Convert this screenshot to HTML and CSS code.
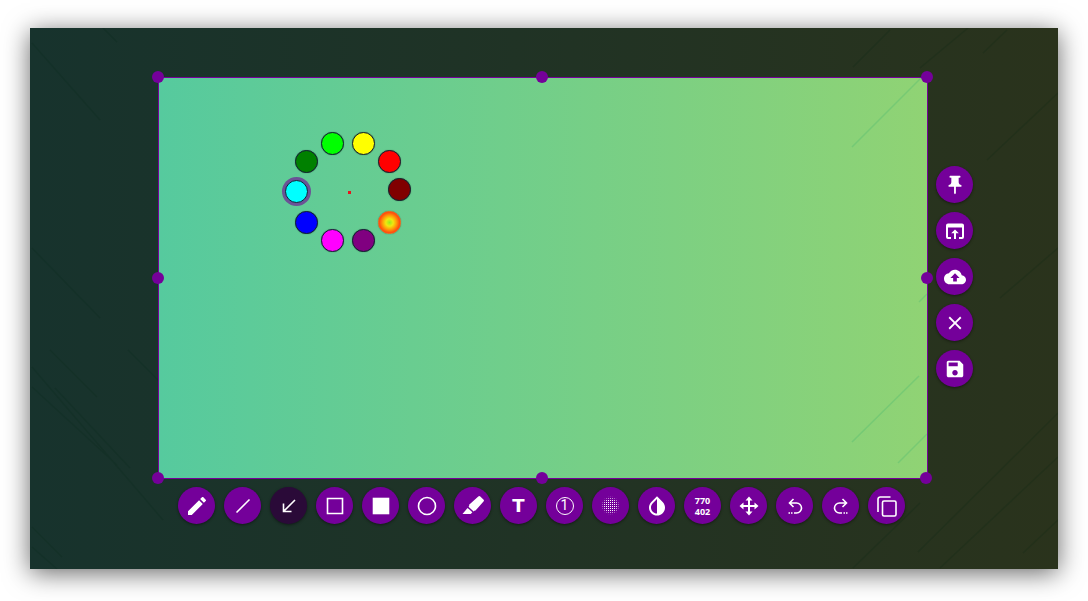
FILE: index.html
```html
<!DOCTYPE html>
<html lang="en">
<head>
<meta charset="utf-8">
<title>Screenshot editor</title>
<link rel="stylesheet" href="styles.css">
</head>
<body>
<main class="screen">
  <svg class="streaks" viewBox="0 0 1028 541" aria-hidden="true">
    <g class="streak-dark">
      <path d="M2 15L70 92M73 0L87 14M2 339L133 492M2 359L87 437M20 322L67 369M98 322L133 357M2 499L32 529M2 519L27 541M2 220L70 290M25 360L100 440"/>
      <path d="M823 39L860 2M890 40L938 0M953 25L977 2M957 132L1028 65M888 524L1028 385M910 540L1028 429M993 525L1028 492M823 540L890 475M970 270L1028 220"/>
    </g>
  </svg>
  <section class="selection">
    <svg class="streaks" viewBox="0 0 768 400" aria-hidden="true">
      <g class="streak-light">
        <path d="M693 69L762 0M693 364L760 298M739 385L768 356M760 224L768 216"/>
      </g>
    </svg>
    <div class="wheel">
      <span class="dot c-green" style="left:161px;top:54px"></span>
      <span class="dot c-yellow" style="left:192px;top:54px"></span>
      <span class="dot c-red" style="left:218px;top:72px"></span>
      <span class="dot c-maroon" style="left:228px;top:100px"></span>
      <span class="dot c-fire" style="left:218px;top:133px"></span>
      <span class="dot c-purple" style="left:192px;top:151px"></span>
      <span class="dot c-magenta" style="left:161px;top:151px"></span>
      <span class="dot c-blue" style="left:135px;top:133px"></span>
      <span class="dot c-cyan" style="left:125px;top:102px"></span>
      <span class="dot c-darkgreen" style="left:135px;top:72px"></span>
      <span class="center"></span>
    </div>
    <i class="handle h-tl"></i><i class="handle h-t"></i><i class="handle h-tr"></i>
    <i class="handle h-l"></i><i class="handle h-r"></i>
    <i class="handle h-bl"></i><i class="handle h-b"></i><i class="handle h-br"></i>
  </section>

  <nav class="bar bar-side">
    <button class="tool"><svg class="ic-22" viewBox="0 0 24 24"><path d="M16 9V4h1c.55 0 1-.45 1-1s-.45-1-1-1H7c-.55 0-1 .45-1 1s.45 1 1 1h1v5c0 1.66-1.34 3-3 3v2h5.97v7l1 1 1-1v-7H19v-2c-1.66 0-3-1.34-3-3z"/></svg></button>
    <button class="tool"><svg viewBox="0 0 24 24"><path d="M5 4.500h14a2 2 0 0 1 2 2V18a2 2 0 0 1-2 2h-3v-2h3V8.500H5V18h3v2H5a2 2 0 0 1-2-2V6.500a2 2 0 0 1 2-2z"/><path d="M12 10.500l-3.800 3.800H11V20h2v-5.700h2.800z"/></svg></button>
    <button class="tool"><svg class="ic-22" viewBox="0 0 24 24"><path d="M19.35 10.04C18.67 6.59 15.64 4 12 4 9.11 4 6.6 5.64 5.35 8.04 2.34 8.36 0 10.91 0 14c0 3.31 2.69 6 6 6h13c2.76 0 5-2.24 5-5 0-2.64-2.05-4.78-4.65-4.96zM14 13v4h-4v-4H7l5-5 5 5h-3z"/></svg></button>
    <button class="tool"><svg class="ic-22" viewBox="0 0 24 24"><path d="M19 6.41L17.59 5 12 10.59 6.41 5 5 6.41 10.59 12 5 17.59 6.41 19 12 13.41 17.59 19 19 17.59 13.41 12z"/></svg></button>
    <button class="tool"><svg class="ic-22" viewBox="0 0 24 24"><path d="M17 3H5c-1.11 0-2 .9-2 2v14c0 1.1.89 2 2 2h14c1.1 0 2-.9 2-2V7l-4-4zm-5 16c-1.66 0-3-1.34-3-3s1.34-3 3-3 3 1.34 3 3-1.34 3-3 3zm3-10H5V5h10v4z"/></svg></button>
  </nav>

  <nav class="bar bar-bottom">
    <button class="tool"><svg viewBox="0 0 24 24"><path d="M3 17.25V21h3.75L17.81 9.94l-3.75-3.75L3 17.25zM20.71 7.04c.39-.39.39-1.02 0-1.41l-2.34-2.34c-.39-.39-1.02-.39-1.41 0l-1.83 1.83 3.75 3.75 1.83-1.83z"/></svg></button>
    <button class="tool"><svg viewBox="0 0 24 24"><path class="ln" d="M5.500 18.500L18.500 5.500"/></svg></button>
    <button class="tool tool-active"><svg viewBox="0 0 24 24"><path class="ln" d="M18 6L6.500 17.500M6.500 9.500V17.500H14.500"/></svg></button>
    <button class="tool"><svg viewBox="0 0 24 24"><path class="ln" d="M4.500 4.500h15v15h-15z"/></svg></button>
    <button class="tool"><svg viewBox="0 0 24 24"><path d="M3.700 3.700h16.600v16.600H3.700z"/></svg></button>
    <button class="tool"><svg viewBox="0 0 24 24"><circle class="ln" cx="12" cy="12" r="8.500"/></svg></button>
    <button class="tool"><svg viewBox="0 0 24 24"><path d="M17.300 2.600a1.400 1.400 0 0 1 2 0l3.100 2.800a1.400 1.400 0 0 1 .1 2L14.500 16.600l-1.200.2-.6.7-5.200-4.700.7-.8-.1-1.300z"/><path d="M6.600 13.900l4.800 4.300-1.700 1.800H1.500z"/></svg></button>
    <button class="tool tool-letter">T</button>
    <button class="tool"><span class="num">1</span></button>
    <button class="tool"><span class="dither"></span></button>
    <button class="tool"><svg viewBox="0 0 24 24"><path d="M17.66 7.930L12 2.270 6.340 7.930c-3.120 3.120-3.120 8.190 0 11.310C7.900 20.800 9.950 21.580 12 21.580c2.050 0 4.100-.78 5.660-2.340 3.120-3.120 3.120-8.190 0-11.310zM12 19.590c-1.600 0-3.110-.62-4.240-1.760C6.620 16.690 6 15.190 6 13.590s.62-3.110 1.760-4.240L12 5.100v14.490z"/></svg></button>
    <button class="tool tool-size"><span>770</span><span>402</span></button>
    <button class="tool"><svg viewBox="0 0 24 24"><path class="ln ln-thick" d="M12 5V19M5 12H19"/><path d="M12 2.500L8.500 6.500h7zM12 21.500l-3.500-4h7zM2.500 12l4-3.500v7zM21.500 12l-4-3.500v7z"/></svg></button>
    <button class="tool"><svg viewBox="0 0 24 24"><path class="ln" d="M10.500 5L6.500 9l4 4M6.500 9H13.500a5 5 0 0 1 0 10H11"/><path d="M8 18.200h1.500v1.500H8zM5.500 18.200H7v1.500H5.500z"/></svg></button>
    <button class="tool"><svg viewBox="0 0 24 24"><path class="ln" d="M13.500 5l4 4-4 4M17.500 9H10.500a5 5 0 0 0 0 10H13"/><path d="M14.500 18.200H16v1.500h-1.500zM17 18.200h1.500v1.500H17z"/></svg></button>
    <button class="tool"><svg viewBox="0 0 24 24"><path class="ln" d="M15.500 3H5.200A2.200 2.200 0 0 0 3 5.200V18"/><rect class="ln" x="7.500" y="7" width="13.500" height="15" rx="1.500"/></svg></button>
  </nav>
</main>
</body>
</html>
```
FILE: styles.css
```css
* { box-sizing: border-box; }
html, body { margin: 0; height: 100%; background: #fff; overflow: hidden; }
body { padding: 28px 30px 32px; }

.screen {
  position: relative;
  width: 1028px;
  height: 541px;
  background: linear-gradient(90deg, #17332d, #2a331c);
  box-shadow: 0 4px 24px rgba(0, 0, 0, .6);
}

.streaks { position: absolute; inset: 0; width: 100%; height: 100%; pointer-events: none; }
.streak-dark path { fill: none; stroke: rgba(0, 40, 20, .16); stroke-width: 1.5; }
.streak-light path { fill: none; stroke: rgba(60, 180, 110, .28); stroke-width: 1.5; }

.selection {
  position: absolute;
  left: 128px;
  top: 49px;
  width: 770px;
  height: 402px;
  border: 1px solid #76009a;
  background: linear-gradient(90deg, #56ca9e, #90d374);
}

.handle {
  position: absolute;
  width: 12px;
  height: 12px;
  border-radius: 50%;
  background: #74009a;
}
.h-tl { left: -7.500px; top: -7.500px; }
.h-t { left: 377px; top: -7.500px; }
.h-tr { left: 761.500px; top: -7.500px; }
.h-l { left: -7.500px; top: 193.500px; }
.h-r { left: 761.500px; top: 193.500px; }
.h-bl { left: -7.500px; top: 393.500px; }
.h-b { left: 377px; top: 393.500px; }
.h-br { left: 761px; top: 393.500px; }

.wheel { position: absolute; inset: -.5px 0 0 .5px; }
.dot {
  position: absolute;
  width: 23px;
  height: 23px;
  border-radius: 50%;
  border: 1px solid #123;
  box-shadow: 0 0 1px rgba(0, 0, 0, .5);
}
.c-green { background: #0f0; }
.c-yellow { background: #ff0; }
.c-red { background: #f00; }
.c-maroon { background: #800000; }
.c-fire {
  background: radial-gradient(circle closest-side, #9be820 0, #f0e80f 35%, #ffa008 65%, #ff4510 100%);
  border-color: #ff5a10;
}
.c-purple { background: #800080; }
.c-magenta { background: #f0f; }
.c-blue { background: #00f; }
.c-cyan { background: #0ff; box-shadow: 0 0 0 3px #6b5296; }
.c-darkgreen { background: #008000; }
.center { position: absolute; left: 188px; top: 113px; width: 3px; height: 3px; background: #e8141c; }

.bar { position: absolute; display: flex; gap: 9px; }
.bar-side { flex-direction: column; left: 906px; top: 138px; }
.bar-bottom { left: 148px; top: 459px; }

.tool {
  width: 37px;
  height: 37px;
  padding: 0;
  border: 0;
  border-radius: 50%;
  background: #74009a;
  color: #fff;
  display: flex;
  align-items: center;
  justify-content: center;
  box-shadow: 0 1px 3px rgba(0, 0, 0, .45);
}
.tool-active { background: #2a0a38; }
.tool svg { width: 24px; height: 24px; fill: #fff; display: block; }
.tool svg.ic-22 { width: 22px; height: 22px; }
.tool svg .ln { fill: none; stroke: #fff; stroke-width: 1.6; }
.tool svg .ln-thick { stroke-width: 2; }

.dither {
  width: 19px;
  height: 19px;
  background: conic-gradient(#fff 25%, transparent 0) 0 0 / 2px 2px;
  -webkit-mask-image: radial-gradient(circle closest-side, #000 60%, transparent 100%);
  mask-image: radial-gradient(circle closest-side, #000 60%, transparent 100%);
}

.tool-letter { font-family: "DejaVu Sans", sans-serif; font-size: 18px; font-weight: 700; line-height: 1; }
.num {
  width: 18px;
  height: 18px;
  border: 1.600px solid #fff;
  border-radius: 50%;
  font-family: "Roboto", sans-serif;
  font-size: 14px;
  font-weight: 400;
  line-height: 15px;
  text-align: center;
}
.tool-size {
  flex-direction: column;
  font-family: "Open Sans", sans-serif;
  font-size: 9px;
  font-weight: 700;
  line-height: 11px;
}
```
